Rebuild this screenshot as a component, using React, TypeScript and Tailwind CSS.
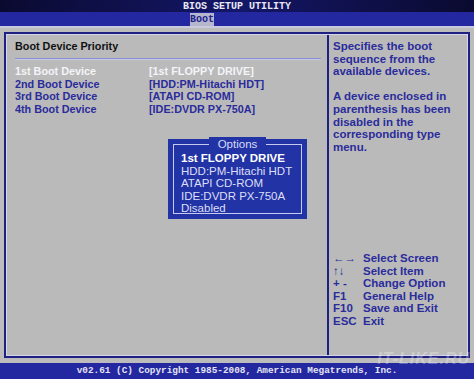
const sans = { fontFamily: '"Liberation Sans", Arial, sans-serif' };

const devices = [
  ['1st Boot Device', '[1st FLOPPY DRIVE]'],
  ['2nd Boot Device', '[HDD:PM-Hitachi HDT]'],
  ['3rd Boot Device', '[ATAPI CD-ROM]'],
  ['4th Boot Device', '[IDE:DVDR PX-750A]'],
];

const options = ['1st FLOPPY DRIVE', 'HDD:PM-Hitachi HDT', 'ATAPI CD-ROM', 'IDE:DVDR PX-750A', 'Disabled'];

const help = [
  'Specifies the boot',
  'sequence from the',
  'available devices.',
  '',
  'A device enclosed in',
  'parenthesis has been',
  'disabled in the',
  'corresponding type',
  'menu.',
];

const keys = [
  ['\u2190\u2192', 'Select Screen'],
  ['\u2191\u2193', 'Select Item'],
  ['+ -', 'Change Option'],
  ['F1', 'General Help'],
  ['F10', 'Save and Exit'],
  ['ESC', 'Exit'],
];

export default function App() {
  return (
    <div className="relative w-[474px] h-[379px] overflow-hidden bg-[#bcbcbc] flex flex-col">
      {/* title */}
      <div className="h-[12px] bg-gradient-to-r from-[#0a0a30] via-[#141668] to-[#0a0a30] flex justify-center items-center">
        <span className="font-['Liberation_Mono',monospace] text-[10px] font-bold leading-none text-[#e8e8f4] mt-[1px]">
          BIOS SETUP UTILITY
        </span>
      </div>
      {/* tabs */}
      <div className="h-[14px] bg-[#2328a0] flex items-end pl-[190px]">
        <div className="w-[24px] h-[13px] bg-[#b6b6cc] flex items-center justify-center">
          <span className="font-['Liberation_Mono',monospace] text-[10px] font-bold leading-none text-[#1d2390]">Boot</span>
        </div>
      </div>
      <div className="h-[2px] bg-[#c9c9e0]" />

      <div className="flex-1 flex flex-col pt-[4px] pl-[4px] pr-[4px]">
        <div className="h-[326px] flex border-[2px] border-[#1e2180] outline outline-1 outline-[#d4d4ec] -outline-offset-[3px] bg-[#bababa]" style={sans}>
          {/* left panel */}
          <div className="w-[321px] relative pt-[5px] pl-[9px] pr-[6px]">
            <div className="text-[10.8px] font-bold text-[#111] leading-[14px]">Boot Device Priority</div>
            <div className="mt-[5px] h-[2px] bg-[#8c8cd0] border-b border-[#c8c8e8]" />
            <div className="mt-[5px] flex flex-col">
              {devices.map(([l, v], i) => (
                <div key={l} className={`flex text-[10.8px] font-bold leading-[12.6px] ${i === 0 ? 'text-[#f4f4f8]' : 'text-[#2a2c9c]'}`}>
                  <span className="w-[134px]">{l}</span>
                  <span>{v}</span>
                </div>
              ))}
            </div>

            {/* options popup */}
            <div className="absolute left-[162px] top-[105px] w-[139px] h-[80px] bg-[#2233a6] p-[5px]">
              <div className="relative h-full border border-[#c6caf0]">
                <div className="absolute -top-[8px] left-0 right-0 flex justify-center">
                  <span className="bg-[#2233a6] px-[9px] text-[11.5px] leading-[14px] text-[#d8dcf4]">Options</span>
                </div>
                <div className="pt-[7px] pl-[7px] flex flex-col">
                  {options.map((o, i) => (
                    <span key={o} className={`text-[11.5px] leading-[12.6px] ${i === 0 ? 'font-bold text-white' : 'text-[#dcdff6]'}`}>{o}</span>
                  ))}
                </div>
              </div>
            </div>
          </div>

          {/* right panel */}
          <div className="flex-1 border-l-[2px] border-[#1e2180] pl-[4px] pt-[6px] flex flex-col justify-between pb-[29px]">
            <div className="flex flex-col">
              {help.map((h, i) => (
                <span key={i} className="h-[12.6px] text-[11.5px] font-bold leading-[12.6px] text-[#2a2c9c]">{h}</span>
              ))}
            </div>
            <div className="flex flex-col">
              {keys.map(([k, d]) => (
                <div key={d} className="flex text-[11.5px] font-bold leading-[12.5px] text-[#2a2c9c]">
                  <span className="w-[30px]">{k}</span>
                  <span>{d}</span>
                </div>
              ))}
            </div>
          </div>
        </div>
      </div>

      {/* footer */}
      <div className="h-[16px] bg-[#2328a0] flex justify-center items-center">
        <span className="font-['Liberation_Mono',monospace] text-[9.4px] font-bold leading-none text-[#e4e4f4]">
          v02.61 (C) Copyright 1985-2008, American Megatrends, Inc.
        </span>
      </div>
      <div className="absolute right-[4px] bottom-[8px] text-[16px] font-bold italic text-white/30 tracking-[1px]" style={sans}>IT-LIKE.RU</div>
    </div>
  );
}
